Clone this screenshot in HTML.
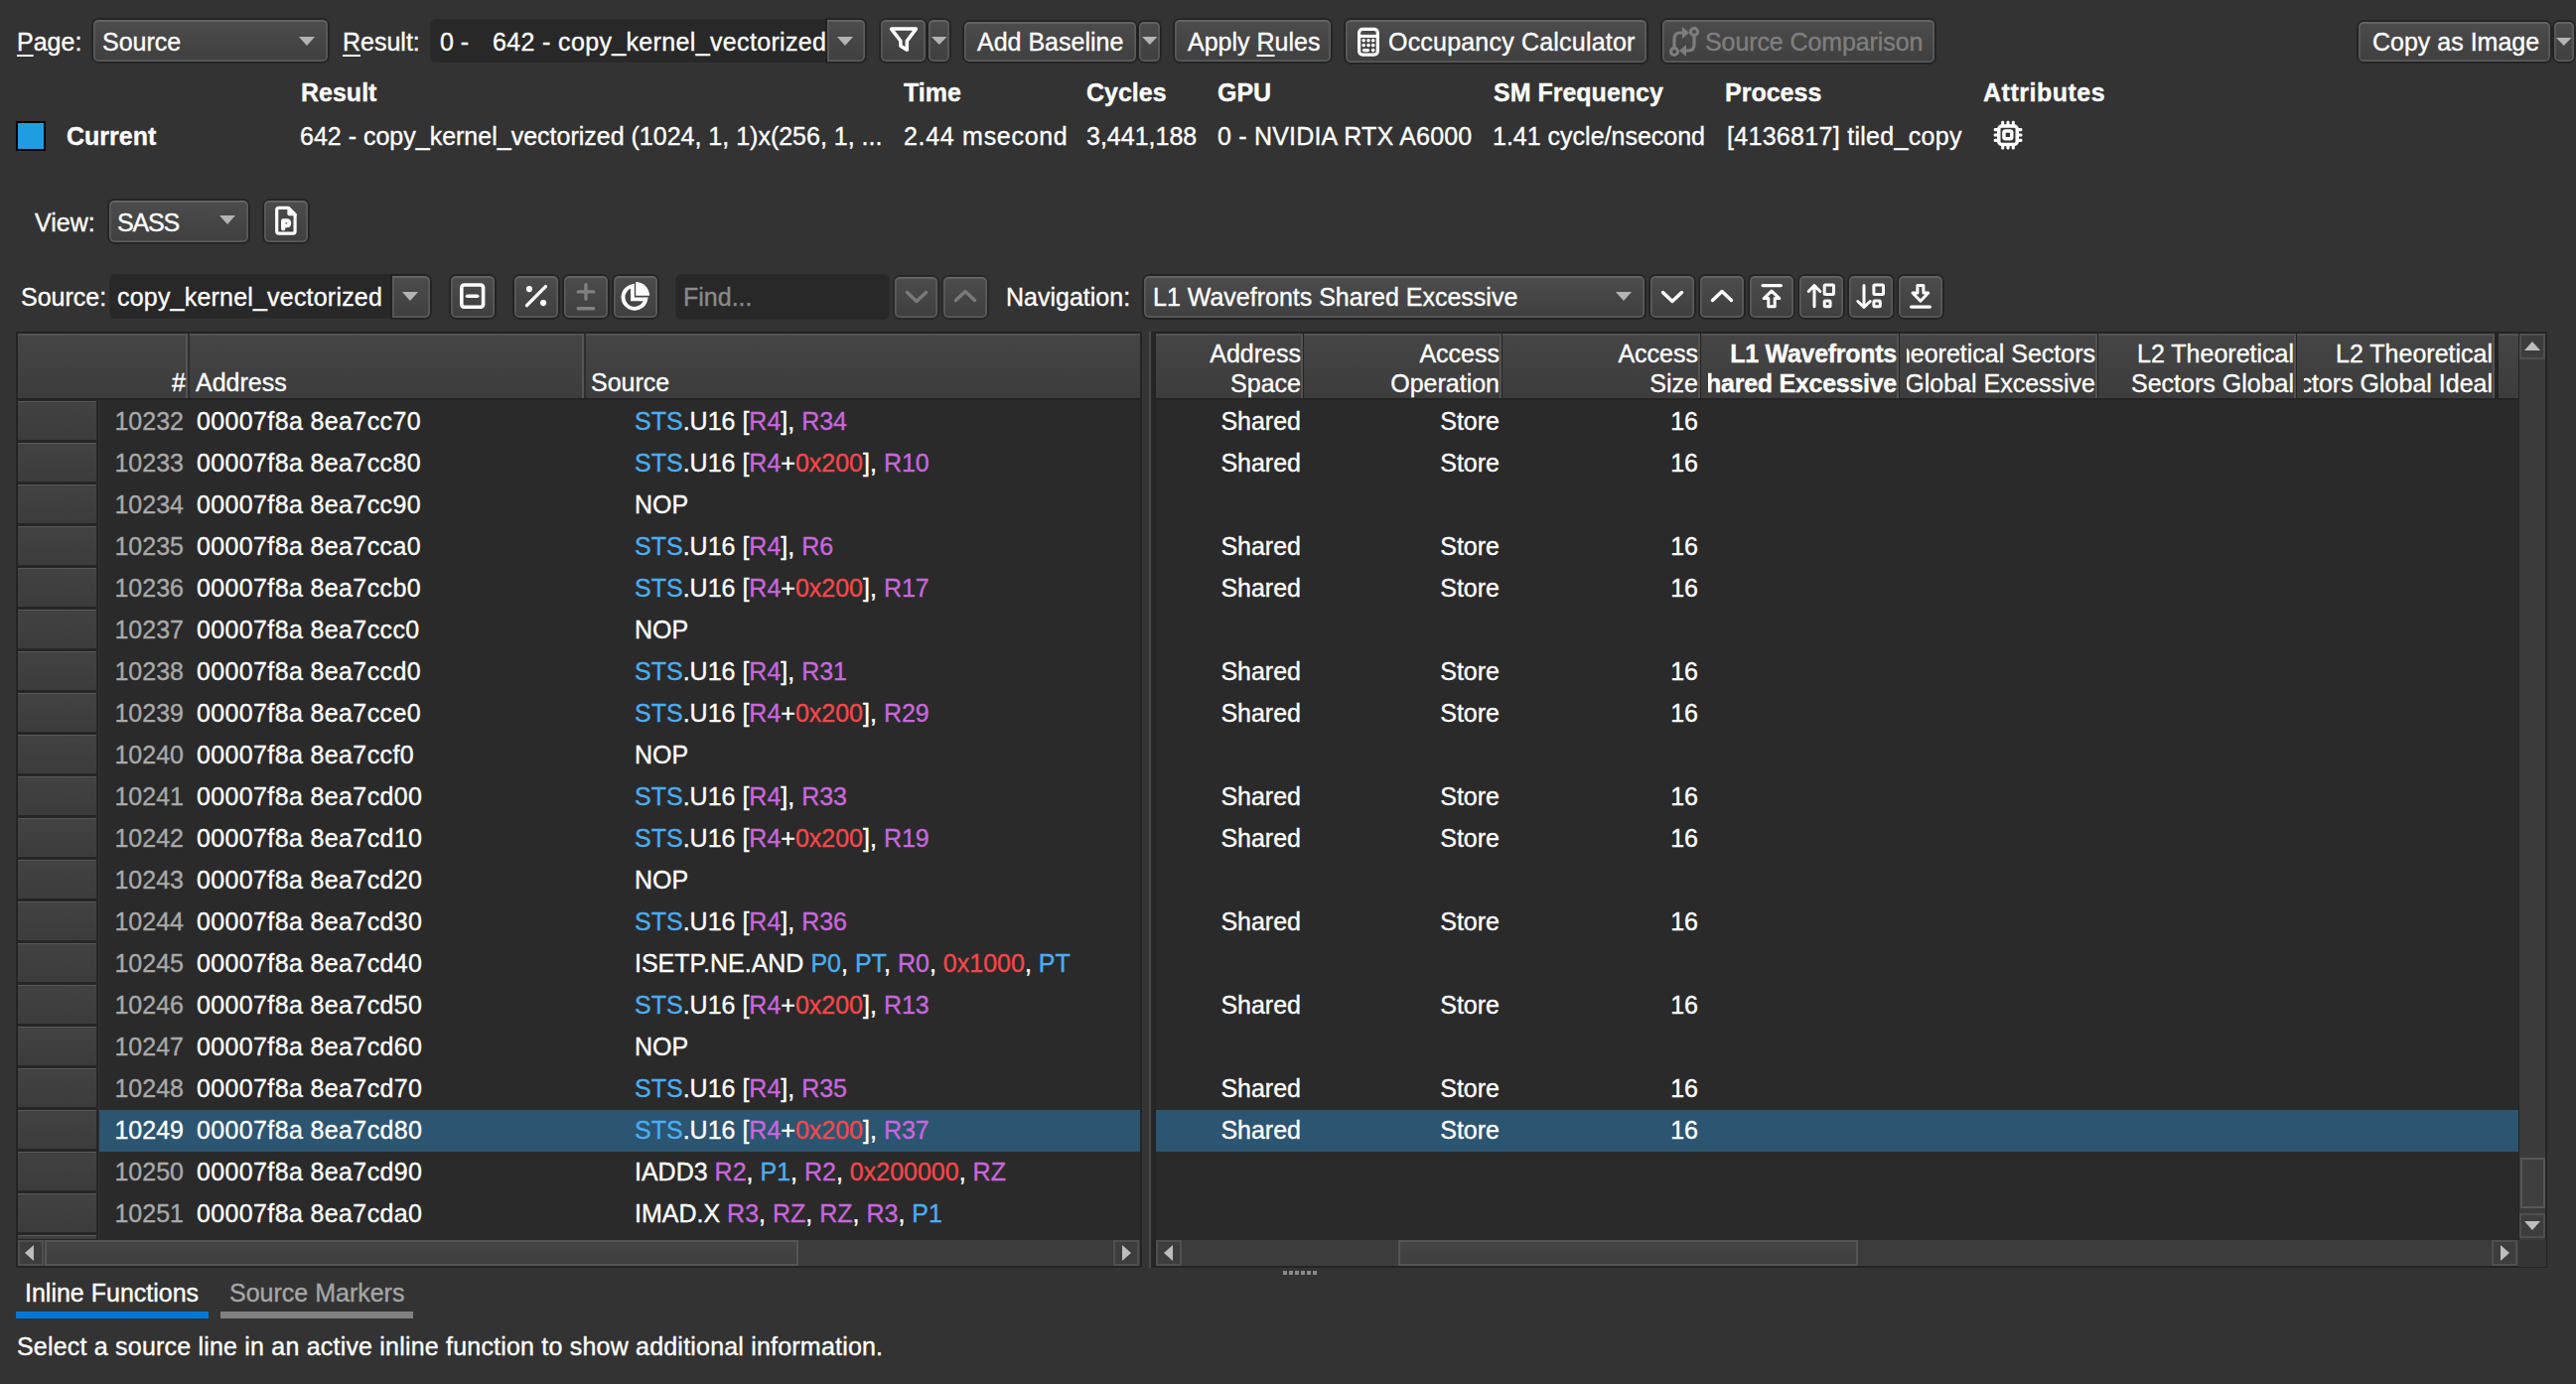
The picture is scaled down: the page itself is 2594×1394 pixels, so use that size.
<!DOCTYPE html><html><head><meta charset="utf-8"><style>
*{box-sizing:border-box}
html,body{margin:0;padding:0}
body{width:2594px;height:1394px;background:#333333;position:relative;overflow:hidden;font-family:"Liberation Sans",sans-serif;font-size:25px;color:#fff;-webkit-text-stroke-width:0.35px}
.a{position:absolute}
.t{position:absolute;white-space:pre}
.btn{position:absolute;border:1.8px solid #232323;border-radius:6px;background:linear-gradient(#4c4c4c,#3f3f3f);box-shadow:inset 0 1.8px 0 #666,inset 0 0 0 1.8px #5a5a5a,0 0 0 0.8px rgba(20,20,20,0.5)}
.fld{position:absolute;border-radius:6px;background:#282828;border:1px solid #2b2b2b}
.hdr{position:absolute;background:linear-gradient(#454545,#3c3c3c);border-top:2px solid #525252;border-right:2px solid #535353}
.vh{position:absolute;background:linear-gradient(#424242,#3c3c3c);border-top:1.3px solid #585858}
.clip{position:absolute;overflow:hidden}
</style></head><body><div class="t" style="left:17px;top:30px;color:#fff;font-size:25px;line-height:25px;"><u style="text-decoration-thickness:2px;text-underline-offset:4px">P</u>age:</div>
<div class="btn" style="left:93px;top:19px;width:238px;height:44px;"></div>
<div class="t" style="left:103px;top:30px;color:#fff;font-size:25px;line-height:25px;">Source</div>
<svg class="a" style="left:301.0px;top:36.5px" width="16" height="9"><path d="M0 0H16L8.0 9Z" fill="#b4b4b4"/></svg>
<div class="t" style="left:345px;top:30px;color:#fff;font-size:25px;line-height:25px;"><u style="text-decoration-thickness:2px;text-underline-offset:4px">R</u>esult:</div>
<div class="fld" style="left:433px;top:19px;width:439px;height:44px"></div>
<div class="btn" style="left:832px;top:19px;width:40px;height:44px;border-radius:0 6px 6px 0"></div>
<div class="clip" style="left:440px;top:20px;width:392px;height:42px">
<div class="t" style="left:3px;top:10px;line-height:25px">0 -</div><div class="t" style="left:56px;top:10px;line-height:25px;letter-spacing:0.35px">642 - copy_kernel_vectorized</div></div>
<svg class="a" style="left:843.0px;top:36.5px" width="16" height="9"><path d="M0 0H16L8.0 9Z" fill="#b4b4b4"/></svg>
<div class="btn" style="left:886px;top:19px;width:47px;height:44px;"></div>
<svg class="a" style="left:890px;top:24px" width="40" height="32" viewBox="0 0 40 32"><path d="M7.6 5.1H32.4L23.3 17.2V26.3L16.9 22.2V17.2Z" fill="none" stroke="#fff" stroke-width="3.5" stroke-linejoin="round"/></svg>
<div class="btn" style="left:934px;top:19px;width:23px;height:44px;"></div>
<svg class="a" style="left:938.25px;top:37.0px" width="15.5" height="8"><path d="M0 0H15.5L7.75 8Z" fill="#b4b4b4"/></svg>
<div class="btn" style="left:970px;top:21px;width:175px;height:42px;"></div>
<div class="t" style="left:984px;top:30px;color:#fff;font-size:25px;line-height:25px;">Add Baseline</div>
<div class="btn" style="left:1146px;top:21px;width:23px;height:42px;"></div>
<svg class="a" style="left:1150.25px;top:37.0px" width="15.5" height="8"><path d="M0 0H15.5L7.75 8Z" fill="#b4b4b4"/></svg>
<div class="btn" style="left:1182px;top:19px;width:159px;height:44px;"></div>
<div class="t" style="left:1196px;top:30px;color:#fff;font-size:25px;line-height:25px;">Apply <u style="text-decoration-thickness:2px;text-underline-offset:4px">R</u>ules</div>
<div class="btn" style="left:1354px;top:19px;width:305px;height:45px;"></div>
<svg class="a" style="left:1366px;top:27px" width="24" height="31" viewBox="0 0 24 31"><rect x="2.6" y="2.3" width="18.7" height="25.8" rx="3.5" fill="none" stroke="#fff" stroke-width="3.2"/><rect x="2.6" y="7.9" width="18.7" height="3.1" fill="#fff"/><circle cx="7.2" cy="13.8" r="1.8" fill="#fff"/><circle cx="7.2" cy="18.6" r="1.8" fill="#fff"/><circle cx="12" cy="13.8" r="1.8" fill="#fff"/><circle cx="12" cy="18.6" r="1.8" fill="#fff"/><circle cx="16.7" cy="13.8" r="1.8" fill="#fff"/><circle cx="16.7" cy="18.6" r="1.8" fill="#fff"/><circle cx="16.7" cy="23.6" r="1.8" fill="#fff"/><rect x="5.8" y="21.9" width="7.3" height="3.4" rx="1.7" fill="#fff"/></svg>
<div class="t" style="left:1398px;top:30px;color:#fff;font-size:25px;line-height:25px;letter-spacing:0.2px">Occupancy Calculator</div>
<div class="btn" style="left:1673px;top:19px;width:276px;height:45px;"></div>
<svg class="a" style="left:1681px;top:27px" width="30" height="31" viewBox="0 0 30 31"><g fill="none" stroke="#7d7d7d" stroke-width="3.2" stroke-linecap="round" stroke-linejoin="round"><circle cx="5" cy="25" r="3.5"/><circle cx="25" cy="5" r="3.5"/><path d="M5 21V12Q5 6 11 6H14"/><path d="M25 9V18Q25 24 19 24H16"/></g><path d="M13 0L20 6L13 12Z" fill="#7d7d7d"/><path d="M17 18L10 24L17 30Z" fill="#7d7d7d"/></svg>
<div class="t" style="left:1717px;top:30px;color:#7f7f7f;font-size:25px;line-height:25px;letter-spacing:-0.1px">Source Comparison</div>
<div class="btn" style="left:2374px;top:21px;width:195px;height:42px;"></div>
<div class="t" style="left:2389px;top:30px;color:#fff;font-size:25px;line-height:25px;">Copy as Image</div>
<div class="btn" style="left:2571px;top:21px;width:22px;height:42px;"></div>
<svg class="a" style="left:2574.25px;top:37.5px" width="15.5" height="8"><path d="M0 0H15.5L7.75 8Z" fill="#b4b4b4"/></svg>
<div class="t" style="left:303px;top:81px;color:#fff;font-weight:700;font-size:25px;line-height:25px;">Result</div>
<div class="t" style="left:910px;top:81px;color:#fff;font-weight:700;font-size:25px;line-height:25px;">Time</div>
<div class="t" style="left:1094px;top:81px;color:#fff;font-weight:700;font-size:25px;line-height:25px;">Cycles</div>
<div class="t" style="left:1226px;top:81px;color:#fff;font-weight:700;font-size:25px;line-height:25px;">GPU</div>
<div class="t" style="left:1504px;top:81px;color:#fff;font-weight:700;font-size:25px;line-height:25px;">SM Frequency</div>
<div class="t" style="left:1737px;top:81px;color:#fff;font-weight:700;font-size:25px;line-height:25px;">Process</div>
<div class="t" style="left:1997px;top:81px;color:#fff;font-weight:700;font-size:25px;line-height:25px;letter-spacing:0.5px">Attributes</div>
<div class="a" style="left:16px;top:122px;width:30px;height:30px;background:#1f9de0;border:2px solid #000"></div>
<div class="t" style="left:67px;top:125px;color:#fff;font-weight:700;font-size:25px;line-height:25px;">Current</div>
<div class="t" style="left:302px;top:125px;color:#fff;font-size:25px;line-height:25px;">642 - copy_kernel_vectorized (1024, 1, 1)x(256, 1, ...</div>
<div class="t" style="left:910px;top:125px;color:#fff;font-size:25px;line-height:25px;letter-spacing:0.7px">2.44 msecond</div>
<div class="t" style="left:1094px;top:125px;color:#fff;font-size:25px;line-height:25px;">3,441,188</div>
<div class="t" style="left:1226px;top:125px;color:#fff;font-size:25px;line-height:25px;letter-spacing:0.2px">0 - NVIDIA RTX A6000</div>
<div class="t" style="left:1503px;top:125px;color:#fff;font-size:25px;line-height:25px;">1.41 cycle/nsecond</div>
<div class="t" style="left:1739px;top:125px;color:#fff;font-size:25px;line-height:25px;letter-spacing:0.3px">[4136817] tiled_copy</div>
<svg class="a" style="left:2007px;top:121px" width="30" height="30" viewBox="0 0 30 30"><rect x="5.75" y="6" width="18.5" height="18.5" rx="3" fill="none" stroke="#fff" stroke-width="3.5"/><rect x="10.95" y="11" width="7.8" height="7.8" rx="1.5" fill="none" stroke="#fff" stroke-width="3.5"/><rect x="8.2" y="0.7" width="3" height="5" rx="1.2" fill="#fff"/><rect x="8.2" y="24.6" width="3" height="4.8" rx="1.2" fill="#fff"/><rect x="0.7" y="8.1" width="5" height="3.2" rx="1.2" fill="#fff"/><rect x="24.6" y="8.1" width="4.8" height="3.2" rx="1.2" fill="#fff"/><rect x="13.5" y="0.7" width="3" height="5" rx="1.2" fill="#fff"/><rect x="13.5" y="24.6" width="3" height="4.8" rx="1.2" fill="#fff"/><rect x="0.7" y="13.4" width="5" height="3.2" rx="1.2" fill="#fff"/><rect x="24.6" y="13.4" width="4.8" height="3.2" rx="1.2" fill="#fff"/><rect x="18.8" y="0.7" width="3" height="5" rx="1.2" fill="#fff"/><rect x="18.8" y="24.6" width="3" height="4.8" rx="1.2" fill="#fff"/><rect x="0.7" y="18.7" width="5" height="3.2" rx="1.2" fill="#fff"/><rect x="24.6" y="18.7" width="4.8" height="3.2" rx="1.2" fill="#fff"/></svg>
<div class="t" style="left:35px;top:212px;color:#fff;font-size:25px;line-height:25px;">View:</div>
<div class="btn" style="left:109px;top:201px;width:142px;height:44px;"></div>
<div class="t" style="left:118px;top:212px;color:#fff;font-size:25px;line-height:25px;letter-spacing:-1.2px">SASS</div>
<svg class="a" style="left:221.0px;top:216.5px" width="16" height="9"><path d="M0 0H16L8.0 9Z" fill="#b4b4b4"/></svg>
<div class="btn" style="left:265px;top:201px;width:46px;height:44px;"></div>
<svg class="a" style="left:276px;top:206px" width="24" height="32" viewBox="0 0 24 32"><path d="M2.7 5.3Q2.7 3.3 4.7 3.3H14.3L21.1 10.1V27.1Q21.1 29.1 19.1 29.1H4.7Q2.7 29.1 2.7 27.1Z" fill="none" stroke="#fff" stroke-width="3.2" stroke-linejoin="round"/><path d="M13.4 2H15L22.7 9.7V11.2H15Q13.4 11.2 13.4 9.6Z" fill="#fff"/><path d="M9.2 16.3H12.8Q15.3 16.3 15.3 18.85Q15.3 21.4 12.8 21.4H9.2Z" fill="none" stroke="#fff" stroke-width="3.9" stroke-linejoin="round"/><path d="M9.2 17V24.3" stroke="#fff" stroke-width="4.3" stroke-linecap="round"/></svg>
<div class="t" style="left:21px;top:287px;color:#fff;font-size:25px;line-height:25px;">Source:</div>
<div class="fld" style="left:110px;top:276px;width:324px;height:45px"></div>
<div class="btn" style="left:394px;top:277px;width:40px;height:44px;border-radius:0 6px 6px 0"></div>
<div class="t" style="left:118px;top:287px;color:#fff;font-size:25px;line-height:25px;letter-spacing:0.2px">copy_kernel_vectorized</div>
<svg class="a" style="left:405.0px;top:293.5px" width="16" height="9"><path d="M0 0H16L8.0 9Z" fill="#b4b4b4"/></svg>
<div class="btn" style="left:453px;top:277px;width:46px;height:44px;"></div>
<svg class="a" style="left:462px;top:284px" width="28" height="28" viewBox="0 0 28 28"><rect x="2.8" y="3" width="21.8" height="22.2" rx="2.5" fill="none" stroke="#fff" stroke-width="3.6"/><path d="M8.5 14.2H18.8" stroke="#fff" stroke-width="3.4" stroke-linecap="round"/></svg>
<div class="btn" style="left:517px;top:277px;width:46px;height:44px;"></div>
<svg class="a" style="left:523px;top:285px" width="34" height="28" viewBox="0 0 34 28"><circle cx="10" cy="6.1" r="3.1" fill="#fff"/><circle cx="24.1" cy="20.1" r="3.1" fill="#fff"/><path d="M7.5 22.6L26.4 3.6" stroke="#fff" stroke-width="3.4" stroke-linecap="round"/></svg>
<div class="btn" style="left:567px;top:277px;width:46px;height:44px;"></div>
<svg class="a" style="left:575px;top:283px" width="30" height="32" viewBox="0 0 30 32"><path d="M15 3.6V18.2M7.2 10.9H22.7M7.2 27.7H22.7" stroke="#808080" stroke-width="3.4" stroke-linecap="round"/></svg>
<div class="btn" style="left:617px;top:277px;width:46px;height:44px;"></div>
<svg class="a" style="left:625px;top:283px" width="32" height="32" viewBox="0 0 32 32"><path d="M11.9 5V18.3H25.33A11.5 11.5 0 1 1 11.9 5Z" fill="none" stroke="#fff" stroke-width="3.8"/><path d="M15.2 14.7V0.9A13.8 13.8 0 0 1 29 14.7Z" fill="#fff"/></svg>
<div class="fld" style="left:680px;top:276px;width:216px;height:46px"></div>
<div class="t" style="left:688px;top:287px;color:#8a8a8a;font-size:25px;line-height:25px;">Find...</div>
<div class="btn" style="left:900px;top:278px;width:45px;height:43px;border-color:#2c2c2c"></div>
<svg class="a" style="left:911px;top:292px" width="24" height="14" viewBox="0 0 24 14"><path d="M2.5 2.5L12 11.5L21.5 2.5" fill="none" stroke="#7a7a7a" stroke-width="3.4" stroke-linecap="round" stroke-linejoin="round"/></svg>
<div class="btn" style="left:949px;top:278px;width:46px;height:43px;border-color:#2c2c2c"></div>
<svg class="a" style="left:960px;top:291px" width="24" height="14" viewBox="0 0 24 14"><path d="M2.5 11.5L12 2.5L21.5 11.5" fill="none" stroke="#7a7a7a" stroke-width="3.4" stroke-linecap="round" stroke-linejoin="round"/></svg>
<div class="t" style="left:1013px;top:287px;color:#fff;font-size:25px;line-height:25px;">Navigation:</div>
<div class="btn" style="left:1151px;top:277px;width:506px;height:44px;"></div>
<div class="t" style="left:1161px;top:287px;color:#fff;font-size:25px;line-height:25px;">L1 Wavefronts Shared Excessive</div>
<svg class="a" style="left:1627.0px;top:293.5px" width="16" height="9"><path d="M0 0H16L8.0 9Z" fill="#b4b4b4"/></svg>
<div class="btn" style="left:1661px;top:277px;width:46px;height:44px;"></div>
<div class="btn" style="left:1711px;top:277px;width:46px;height:44px;"></div>
<div class="btn" style="left:1761px;top:277px;width:46px;height:44px;"></div>
<div class="btn" style="left:1811px;top:277px;width:46px;height:44px;"></div>
<div class="btn" style="left:1861px;top:277px;width:46px;height:44px;"></div>
<div class="btn" style="left:1911px;top:277px;width:46px;height:44px;"></div>
<svg class="a" style="left:1672px;top:292px" width="24" height="14" viewBox="0 0 24 14"><path d="M2.5 2.5L12 11.5L21.5 2.5" fill="none" stroke="#fff" stroke-width="3.4" stroke-linecap="round" stroke-linejoin="round"/></svg>
<svg class="a" style="left:1722px;top:291px" width="24" height="14" viewBox="0 0 24 14"><path d="M2.5 11.5L12 2.5L21.5 11.5" fill="none" stroke="#fff" stroke-width="3.4" stroke-linecap="round" stroke-linejoin="round"/></svg>
<svg class="a" style="left:1770px;top:284px" width="28" height="30" viewBox="0 0 28 30"><rect x="3.5" y="2" width="21.5" height="3.2" rx="1.6" fill="#fff"/><path d="M14 9L6.2 16.6H10.8V24.8H17.2V16.6H21.8Z" fill="none" stroke="#fff" stroke-width="3" stroke-linejoin="round"/></svg>
<svg class="a" style="left:1818px;top:284px" width="32" height="30" viewBox="0 0 32 30"><path d="M9 3.5V24.8M3.2 9.5L9 3.5L14.8 9.5" fill="none" stroke="#fff" stroke-width="3" stroke-linecap="round" stroke-linejoin="round"/><rect x="19.2" y="3" width="9.3" height="9.5" rx="1" fill="none" stroke="#fff" stroke-width="3"/><rect x="19.2" y="18.9" width="5.9" height="5.9" rx="1" fill="none" stroke="#fff" stroke-width="3"/></svg>
<svg class="a" style="left:1868px;top:284px" width="32" height="30" viewBox="0 0 32 30"><path d="M9 3.5V25M2.8 19.5L9 25.5L15.2 19.5" fill="none" stroke="#fff" stroke-width="3" stroke-linecap="round" stroke-linejoin="round"/><rect x="18.9" y="3" width="9.6" height="9.5" rx="1" fill="none" stroke="#fff" stroke-width="3"/><rect x="18.9" y="18.9" width="6.4" height="5.9" rx="1" fill="none" stroke="#fff" stroke-width="3"/></svg>
<svg class="a" style="left:1920px;top:284px" width="28" height="30" viewBox="0 0 28 30"><path d="M10.9 3.5H16.9V11H21.8L13.9 19.2L6 11H10.9Z" fill="none" stroke="#fff" stroke-width="3" stroke-linejoin="round"/><rect x="3" y="23.5" width="22" height="3.2" rx="1.6" fill="#fff"/></svg>
<div class="a" style="left:16px;top:334px;width:1134px;height:943px;background:#242424"></div>
<div class="hdr" style="left:18px;top:336px;width:1130px;height:65px;border-right:0"></div>
<div class="a" style="left:98px;top:336px;width:2px;height:65px;background:#2e2e2e;opacity:0"></div>
<div class="a" style="left:187px;top:336px;width:2px;height:65px;background:#555"></div>
<div class="a" style="left:189px;top:336px;width:2px;height:65px;background:#2e2e2e"></div>
<div class="a" style="left:586px;top:336px;width:2px;height:65px;background:#555"></div>
<div class="a" style="left:588px;top:336px;width:2px;height:65px;background:#2e2e2e"></div>
<div class="t" style="left:127px;width:60px;text-align:right;top:373px;color:#fff;font-size:25px;line-height:25px;">#</div>
<div class="t" style="left:197px;top:373px;color:#fff;font-size:25px;line-height:25px;">Address</div>
<div class="t" style="left:595px;top:373px;color:#fff;font-size:25px;line-height:25px;">Source</div>
<div class="a" style="left:100px;top:403px;width:1048px;height:846px;background:#2a2a2a"></div>
<div class="a" style="left:18px;top:403px;width:82px;height:846px;background:#262626"></div>
<div class="vh" style="left:18px;top:404px;width:79px;height:39px"></div>
<div class="t" style="left:95px;width:90px;text-align:right;top:412px;color:#a9a9a9;font-size:25px;line-height:25px;">10232</div>
<div class="t" style="left:198px;top:412px;color:#fff;font-size:25px;line-height:25px;letter-spacing:0.37px">00007f8a 8ea7cc70</div>
<div class="t" style="left:639px;top:412px;color:#fff;font-size:25px;line-height:25px;"><span style="color:#4aaef3">STS</span><span style="color:#ffffff">.U16 [</span><span style="color:#c867dc">R4</span><span style="color:#ffffff">], </span><span style="color:#c867dc">R34</span></div>
<div class="t" style="left:1190px;width:120px;text-align:right;top:412px;color:#fff;font-size:25px;line-height:25px;">Shared</div>
<div class="t" style="left:1390px;width:120px;text-align:right;top:412px;color:#fff;font-size:25px;line-height:25px;">Store</div>
<div class="t" style="left:1590px;width:120px;text-align:right;top:412px;color:#fff;font-size:25px;line-height:25px;">16</div>
<div class="vh" style="left:18px;top:446px;width:79px;height:39px"></div>
<div class="t" style="left:95px;width:90px;text-align:right;top:454px;color:#a9a9a9;font-size:25px;line-height:25px;">10233</div>
<div class="t" style="left:198px;top:454px;color:#fff;font-size:25px;line-height:25px;letter-spacing:0.37px">00007f8a 8ea7cc80</div>
<div class="t" style="left:639px;top:454px;color:#fff;font-size:25px;line-height:25px;"><span style="color:#4aaef3">STS</span><span style="color:#ffffff">.U16 [</span><span style="color:#c867dc">R4</span><span style="color:#ffffff">+</span><span style="color:#f6474b">0x200</span><span style="color:#ffffff">], </span><span style="color:#c867dc">R10</span></div>
<div class="t" style="left:1190px;width:120px;text-align:right;top:454px;color:#fff;font-size:25px;line-height:25px;">Shared</div>
<div class="t" style="left:1390px;width:120px;text-align:right;top:454px;color:#fff;font-size:25px;line-height:25px;">Store</div>
<div class="t" style="left:1590px;width:120px;text-align:right;top:454px;color:#fff;font-size:25px;line-height:25px;">16</div>
<div class="vh" style="left:18px;top:488px;width:79px;height:39px"></div>
<div class="t" style="left:95px;width:90px;text-align:right;top:496px;color:#a9a9a9;font-size:25px;line-height:25px;">10234</div>
<div class="t" style="left:198px;top:496px;color:#fff;font-size:25px;line-height:25px;letter-spacing:0.37px">00007f8a 8ea7cc90</div>
<div class="t" style="left:639px;top:496px;color:#fff;font-size:25px;line-height:25px;"><span style="color:#ffffff">NOP</span></div>
<div class="vh" style="left:18px;top:530px;width:79px;height:39px"></div>
<div class="t" style="left:95px;width:90px;text-align:right;top:538px;color:#a9a9a9;font-size:25px;line-height:25px;">10235</div>
<div class="t" style="left:198px;top:538px;color:#fff;font-size:25px;line-height:25px;letter-spacing:0.37px">00007f8a 8ea7cca0</div>
<div class="t" style="left:639px;top:538px;color:#fff;font-size:25px;line-height:25px;"><span style="color:#4aaef3">STS</span><span style="color:#ffffff">.U16 [</span><span style="color:#c867dc">R4</span><span style="color:#ffffff">], </span><span style="color:#c867dc">R6</span></div>
<div class="t" style="left:1190px;width:120px;text-align:right;top:538px;color:#fff;font-size:25px;line-height:25px;">Shared</div>
<div class="t" style="left:1390px;width:120px;text-align:right;top:538px;color:#fff;font-size:25px;line-height:25px;">Store</div>
<div class="t" style="left:1590px;width:120px;text-align:right;top:538px;color:#fff;font-size:25px;line-height:25px;">16</div>
<div class="vh" style="left:18px;top:572px;width:79px;height:39px"></div>
<div class="t" style="left:95px;width:90px;text-align:right;top:580px;color:#a9a9a9;font-size:25px;line-height:25px;">10236</div>
<div class="t" style="left:198px;top:580px;color:#fff;font-size:25px;line-height:25px;letter-spacing:0.37px">00007f8a 8ea7ccb0</div>
<div class="t" style="left:639px;top:580px;color:#fff;font-size:25px;line-height:25px;"><span style="color:#4aaef3">STS</span><span style="color:#ffffff">.U16 [</span><span style="color:#c867dc">R4</span><span style="color:#ffffff">+</span><span style="color:#f6474b">0x200</span><span style="color:#ffffff">], </span><span style="color:#c867dc">R17</span></div>
<div class="t" style="left:1190px;width:120px;text-align:right;top:580px;color:#fff;font-size:25px;line-height:25px;">Shared</div>
<div class="t" style="left:1390px;width:120px;text-align:right;top:580px;color:#fff;font-size:25px;line-height:25px;">Store</div>
<div class="t" style="left:1590px;width:120px;text-align:right;top:580px;color:#fff;font-size:25px;line-height:25px;">16</div>
<div class="vh" style="left:18px;top:614px;width:79px;height:39px"></div>
<div class="t" style="left:95px;width:90px;text-align:right;top:622px;color:#a9a9a9;font-size:25px;line-height:25px;">10237</div>
<div class="t" style="left:198px;top:622px;color:#fff;font-size:25px;line-height:25px;letter-spacing:0.37px">00007f8a 8ea7ccc0</div>
<div class="t" style="left:639px;top:622px;color:#fff;font-size:25px;line-height:25px;"><span style="color:#ffffff">NOP</span></div>
<div class="vh" style="left:18px;top:656px;width:79px;height:39px"></div>
<div class="t" style="left:95px;width:90px;text-align:right;top:664px;color:#a9a9a9;font-size:25px;line-height:25px;">10238</div>
<div class="t" style="left:198px;top:664px;color:#fff;font-size:25px;line-height:25px;letter-spacing:0.37px">00007f8a 8ea7ccd0</div>
<div class="t" style="left:639px;top:664px;color:#fff;font-size:25px;line-height:25px;"><span style="color:#4aaef3">STS</span><span style="color:#ffffff">.U16 [</span><span style="color:#c867dc">R4</span><span style="color:#ffffff">], </span><span style="color:#c867dc">R31</span></div>
<div class="t" style="left:1190px;width:120px;text-align:right;top:664px;color:#fff;font-size:25px;line-height:25px;">Shared</div>
<div class="t" style="left:1390px;width:120px;text-align:right;top:664px;color:#fff;font-size:25px;line-height:25px;">Store</div>
<div class="t" style="left:1590px;width:120px;text-align:right;top:664px;color:#fff;font-size:25px;line-height:25px;">16</div>
<div class="vh" style="left:18px;top:698px;width:79px;height:39px"></div>
<div class="t" style="left:95px;width:90px;text-align:right;top:706px;color:#a9a9a9;font-size:25px;line-height:25px;">10239</div>
<div class="t" style="left:198px;top:706px;color:#fff;font-size:25px;line-height:25px;letter-spacing:0.37px">00007f8a 8ea7cce0</div>
<div class="t" style="left:639px;top:706px;color:#fff;font-size:25px;line-height:25px;"><span style="color:#4aaef3">STS</span><span style="color:#ffffff">.U16 [</span><span style="color:#c867dc">R4</span><span style="color:#ffffff">+</span><span style="color:#f6474b">0x200</span><span style="color:#ffffff">], </span><span style="color:#c867dc">R29</span></div>
<div class="t" style="left:1190px;width:120px;text-align:right;top:706px;color:#fff;font-size:25px;line-height:25px;">Shared</div>
<div class="t" style="left:1390px;width:120px;text-align:right;top:706px;color:#fff;font-size:25px;line-height:25px;">Store</div>
<div class="t" style="left:1590px;width:120px;text-align:right;top:706px;color:#fff;font-size:25px;line-height:25px;">16</div>
<div class="vh" style="left:18px;top:740px;width:79px;height:39px"></div>
<div class="t" style="left:95px;width:90px;text-align:right;top:748px;color:#a9a9a9;font-size:25px;line-height:25px;">10240</div>
<div class="t" style="left:198px;top:748px;color:#fff;font-size:25px;line-height:25px;letter-spacing:0.37px">00007f8a 8ea7ccf0</div>
<div class="t" style="left:639px;top:748px;color:#fff;font-size:25px;line-height:25px;"><span style="color:#ffffff">NOP</span></div>
<div class="vh" style="left:18px;top:782px;width:79px;height:39px"></div>
<div class="t" style="left:95px;width:90px;text-align:right;top:790px;color:#a9a9a9;font-size:25px;line-height:25px;">10241</div>
<div class="t" style="left:198px;top:790px;color:#fff;font-size:25px;line-height:25px;letter-spacing:0.37px">00007f8a 8ea7cd00</div>
<div class="t" style="left:639px;top:790px;color:#fff;font-size:25px;line-height:25px;"><span style="color:#4aaef3">STS</span><span style="color:#ffffff">.U16 [</span><span style="color:#c867dc">R4</span><span style="color:#ffffff">], </span><span style="color:#c867dc">R33</span></div>
<div class="t" style="left:1190px;width:120px;text-align:right;top:790px;color:#fff;font-size:25px;line-height:25px;">Shared</div>
<div class="t" style="left:1390px;width:120px;text-align:right;top:790px;color:#fff;font-size:25px;line-height:25px;">Store</div>
<div class="t" style="left:1590px;width:120px;text-align:right;top:790px;color:#fff;font-size:25px;line-height:25px;">16</div>
<div class="vh" style="left:18px;top:824px;width:79px;height:39px"></div>
<div class="t" style="left:95px;width:90px;text-align:right;top:832px;color:#a9a9a9;font-size:25px;line-height:25px;">10242</div>
<div class="t" style="left:198px;top:832px;color:#fff;font-size:25px;line-height:25px;letter-spacing:0.37px">00007f8a 8ea7cd10</div>
<div class="t" style="left:639px;top:832px;color:#fff;font-size:25px;line-height:25px;"><span style="color:#4aaef3">STS</span><span style="color:#ffffff">.U16 [</span><span style="color:#c867dc">R4</span><span style="color:#ffffff">+</span><span style="color:#f6474b">0x200</span><span style="color:#ffffff">], </span><span style="color:#c867dc">R19</span></div>
<div class="t" style="left:1190px;width:120px;text-align:right;top:832px;color:#fff;font-size:25px;line-height:25px;">Shared</div>
<div class="t" style="left:1390px;width:120px;text-align:right;top:832px;color:#fff;font-size:25px;line-height:25px;">Store</div>
<div class="t" style="left:1590px;width:120px;text-align:right;top:832px;color:#fff;font-size:25px;line-height:25px;">16</div>
<div class="vh" style="left:18px;top:866px;width:79px;height:39px"></div>
<div class="t" style="left:95px;width:90px;text-align:right;top:874px;color:#a9a9a9;font-size:25px;line-height:25px;">10243</div>
<div class="t" style="left:198px;top:874px;color:#fff;font-size:25px;line-height:25px;letter-spacing:0.37px">00007f8a 8ea7cd20</div>
<div class="t" style="left:639px;top:874px;color:#fff;font-size:25px;line-height:25px;"><span style="color:#ffffff">NOP</span></div>
<div class="vh" style="left:18px;top:908px;width:79px;height:39px"></div>
<div class="t" style="left:95px;width:90px;text-align:right;top:916px;color:#a9a9a9;font-size:25px;line-height:25px;">10244</div>
<div class="t" style="left:198px;top:916px;color:#fff;font-size:25px;line-height:25px;letter-spacing:0.37px">00007f8a 8ea7cd30</div>
<div class="t" style="left:639px;top:916px;color:#fff;font-size:25px;line-height:25px;"><span style="color:#4aaef3">STS</span><span style="color:#ffffff">.U16 [</span><span style="color:#c867dc">R4</span><span style="color:#ffffff">], </span><span style="color:#c867dc">R36</span></div>
<div class="t" style="left:1190px;width:120px;text-align:right;top:916px;color:#fff;font-size:25px;line-height:25px;">Shared</div>
<div class="t" style="left:1390px;width:120px;text-align:right;top:916px;color:#fff;font-size:25px;line-height:25px;">Store</div>
<div class="t" style="left:1590px;width:120px;text-align:right;top:916px;color:#fff;font-size:25px;line-height:25px;">16</div>
<div class="vh" style="left:18px;top:950px;width:79px;height:39px"></div>
<div class="t" style="left:95px;width:90px;text-align:right;top:958px;color:#a9a9a9;font-size:25px;line-height:25px;">10245</div>
<div class="t" style="left:198px;top:958px;color:#fff;font-size:25px;line-height:25px;letter-spacing:0.37px">00007f8a 8ea7cd40</div>
<div class="t" style="left:639px;top:958px;color:#fff;font-size:25px;line-height:25px;"><span style="color:#ffffff">ISETP.NE.AND </span><span style="color:#4aaef3">P0</span><span style="color:#ffffff">, </span><span style="color:#4aaef3">PT</span><span style="color:#ffffff">, </span><span style="color:#c867dc">R0</span><span style="color:#ffffff">, </span><span style="color:#f6474b">0x1000</span><span style="color:#ffffff">, </span><span style="color:#4aaef3">PT</span></div>
<div class="vh" style="left:18px;top:992px;width:79px;height:39px"></div>
<div class="t" style="left:95px;width:90px;text-align:right;top:1000px;color:#a9a9a9;font-size:25px;line-height:25px;">10246</div>
<div class="t" style="left:198px;top:1000px;color:#fff;font-size:25px;line-height:25px;letter-spacing:0.37px">00007f8a 8ea7cd50</div>
<div class="t" style="left:639px;top:1000px;color:#fff;font-size:25px;line-height:25px;"><span style="color:#4aaef3">STS</span><span style="color:#ffffff">.U16 [</span><span style="color:#c867dc">R4</span><span style="color:#ffffff">+</span><span style="color:#f6474b">0x200</span><span style="color:#ffffff">], </span><span style="color:#c867dc">R13</span></div>
<div class="t" style="left:1190px;width:120px;text-align:right;top:1000px;color:#fff;font-size:25px;line-height:25px;">Shared</div>
<div class="t" style="left:1390px;width:120px;text-align:right;top:1000px;color:#fff;font-size:25px;line-height:25px;">Store</div>
<div class="t" style="left:1590px;width:120px;text-align:right;top:1000px;color:#fff;font-size:25px;line-height:25px;">16</div>
<div class="vh" style="left:18px;top:1034px;width:79px;height:39px"></div>
<div class="t" style="left:95px;width:90px;text-align:right;top:1042px;color:#a9a9a9;font-size:25px;line-height:25px;">10247</div>
<div class="t" style="left:198px;top:1042px;color:#fff;font-size:25px;line-height:25px;letter-spacing:0.37px">00007f8a 8ea7cd60</div>
<div class="t" style="left:639px;top:1042px;color:#fff;font-size:25px;line-height:25px;"><span style="color:#ffffff">NOP</span></div>
<div class="vh" style="left:18px;top:1076px;width:79px;height:39px"></div>
<div class="t" style="left:95px;width:90px;text-align:right;top:1084px;color:#a9a9a9;font-size:25px;line-height:25px;">10248</div>
<div class="t" style="left:198px;top:1084px;color:#fff;font-size:25px;line-height:25px;letter-spacing:0.37px">00007f8a 8ea7cd70</div>
<div class="t" style="left:639px;top:1084px;color:#fff;font-size:25px;line-height:25px;"><span style="color:#4aaef3">STS</span><span style="color:#ffffff">.U16 [</span><span style="color:#c867dc">R4</span><span style="color:#ffffff">], </span><span style="color:#c867dc">R35</span></div>
<div class="t" style="left:1190px;width:120px;text-align:right;top:1084px;color:#fff;font-size:25px;line-height:25px;">Shared</div>
<div class="t" style="left:1390px;width:120px;text-align:right;top:1084px;color:#fff;font-size:25px;line-height:25px;">Store</div>
<div class="t" style="left:1590px;width:120px;text-align:right;top:1084px;color:#fff;font-size:25px;line-height:25px;">16</div>
<div class="a" style="left:100px;top:1118px;width:1048px;height:42px;background:#2c5571"></div>
<div class="a" style="left:1164px;top:1118px;width:1372px;height:42px;background:#2c5571"></div>
<div class="vh" style="left:18px;top:1118px;width:79px;height:39px"></div>
<div class="t" style="left:95px;width:90px;text-align:right;top:1126px;color:#ffffff;font-size:25px;line-height:25px;">10249</div>
<div class="t" style="left:198px;top:1126px;color:#fff;font-size:25px;line-height:25px;letter-spacing:0.37px">00007f8a 8ea7cd80</div>
<div class="t" style="left:639px;top:1126px;color:#fff;font-size:25px;line-height:25px;"><span style="color:#4aaef3">STS</span><span style="color:#ffffff">.U16 [</span><span style="color:#c867dc">R4</span><span style="color:#ffffff">+</span><span style="color:#f6474b">0x200</span><span style="color:#ffffff">], </span><span style="color:#c867dc">R37</span></div>
<div class="t" style="left:1190px;width:120px;text-align:right;top:1126px;color:#fff;font-size:25px;line-height:25px;">Shared</div>
<div class="t" style="left:1390px;width:120px;text-align:right;top:1126px;color:#fff;font-size:25px;line-height:25px;">Store</div>
<div class="t" style="left:1590px;width:120px;text-align:right;top:1126px;color:#fff;font-size:25px;line-height:25px;">16</div>
<div class="vh" style="left:18px;top:1160px;width:79px;height:39px"></div>
<div class="t" style="left:95px;width:90px;text-align:right;top:1168px;color:#a9a9a9;font-size:25px;line-height:25px;">10250</div>
<div class="t" style="left:198px;top:1168px;color:#fff;font-size:25px;line-height:25px;letter-spacing:0.37px">00007f8a 8ea7cd90</div>
<div class="t" style="left:639px;top:1168px;color:#fff;font-size:25px;line-height:25px;"><span style="color:#ffffff">IADD3 </span><span style="color:#c867dc">R2</span><span style="color:#ffffff">, </span><span style="color:#4aaef3">P1</span><span style="color:#ffffff">, </span><span style="color:#c867dc">R2</span><span style="color:#ffffff">, </span><span style="color:#f6474b">0x200000</span><span style="color:#ffffff">, </span><span style="color:#c867dc">RZ</span></div>
<div class="vh" style="left:18px;top:1202px;width:79px;height:39px"></div>
<div class="t" style="left:95px;width:90px;text-align:right;top:1210px;color:#a9a9a9;font-size:25px;line-height:25px;">10251</div>
<div class="t" style="left:198px;top:1210px;color:#fff;font-size:25px;line-height:25px;letter-spacing:0.37px">00007f8a 8ea7cda0</div>
<div class="t" style="left:639px;top:1210px;color:#fff;font-size:25px;line-height:25px;"><span style="color:#ffffff">IMAD.X </span><span style="color:#c867dc">R3</span><span style="color:#ffffff">, </span><span style="color:#c867dc">RZ</span><span style="color:#ffffff">, </span><span style="color:#c867dc">RZ</span><span style="color:#ffffff">, </span><span style="color:#c867dc">R3</span><span style="color:#ffffff">, </span><span style="color:#4aaef3">P1</span></div>
<div class="vh" style="left:18px;top:1244px;width:79px;height:4px"></div>
<div class="a" style="left:99px;top:403px;width:1px;height:846px;background:#313131"></div>
<div class="a" style="left:18px;top:1249px;width:1130px;height:26px;background:#3c3c3c"></div>
<div class="a" style="left:18px;top:1249px;width:26px;height:26px;background:#3d3d3d;border:2px solid #4f4f4f"></div>
<svg class="a" style="left:25px;top:1254px" width="9" height="16" viewBox="0 0 9 16"><path d="M9 0V16L0 8Z" fill="#bdbdbd"/></svg>
<div class="a" style="left:45px;top:1249px;width:759px;height:26px;background:linear-gradient(#454545,#3f3f3f);border:2px solid #555"></div>
<div class="a" style="left:1121px;top:1249px;width:26px;height:26px;background:#3d3d3d;border:2px solid #4f4f4f"></div>
<svg class="a" style="left:1130px;top:1254px" width="9" height="16" viewBox="0 0 9 16"><path d="M0 0V16L9 8Z" fill="#bdbdbd"/></svg>
<div class="a" style="left:1150px;top:334px;width:7px;height:943px;background:#353535"></div>
<div class="a" style="left:1157px;top:334px;width:2px;height:943px;background:#4a4a4a"></div>
<div class="a" style="left:1159px;top:334px;width:5px;height:943px;background:#262626"></div>
<div class="a" style="left:1162px;top:334px;width:1403px;height:943px;background:#242424"></div>
<div class="a" style="left:1164px;top:403px;width:1372px;height:846px;background:#2a2a2a"></div>
<div class="a" style="left:1164px;top:1118px;width:1372px;height:42px;background:#2c5571"></div>
<div class="t" style="left:1190px;width:120px;text-align:right;top:412px;color:#fff;font-size:25px;line-height:25px;">Shared</div>
<div class="t" style="left:1390px;width:120px;text-align:right;top:412px;color:#fff;font-size:25px;line-height:25px;">Store</div>
<div class="t" style="left:1590px;width:120px;text-align:right;top:412px;color:#fff;font-size:25px;line-height:25px;">16</div>
<div class="t" style="left:1190px;width:120px;text-align:right;top:454px;color:#fff;font-size:25px;line-height:25px;">Shared</div>
<div class="t" style="left:1390px;width:120px;text-align:right;top:454px;color:#fff;font-size:25px;line-height:25px;">Store</div>
<div class="t" style="left:1590px;width:120px;text-align:right;top:454px;color:#fff;font-size:25px;line-height:25px;">16</div>
<div class="t" style="left:1190px;width:120px;text-align:right;top:538px;color:#fff;font-size:25px;line-height:25px;">Shared</div>
<div class="t" style="left:1390px;width:120px;text-align:right;top:538px;color:#fff;font-size:25px;line-height:25px;">Store</div>
<div class="t" style="left:1590px;width:120px;text-align:right;top:538px;color:#fff;font-size:25px;line-height:25px;">16</div>
<div class="t" style="left:1190px;width:120px;text-align:right;top:580px;color:#fff;font-size:25px;line-height:25px;">Shared</div>
<div class="t" style="left:1390px;width:120px;text-align:right;top:580px;color:#fff;font-size:25px;line-height:25px;">Store</div>
<div class="t" style="left:1590px;width:120px;text-align:right;top:580px;color:#fff;font-size:25px;line-height:25px;">16</div>
<div class="t" style="left:1190px;width:120px;text-align:right;top:664px;color:#fff;font-size:25px;line-height:25px;">Shared</div>
<div class="t" style="left:1390px;width:120px;text-align:right;top:664px;color:#fff;font-size:25px;line-height:25px;">Store</div>
<div class="t" style="left:1590px;width:120px;text-align:right;top:664px;color:#fff;font-size:25px;line-height:25px;">16</div>
<div class="t" style="left:1190px;width:120px;text-align:right;top:706px;color:#fff;font-size:25px;line-height:25px;">Shared</div>
<div class="t" style="left:1390px;width:120px;text-align:right;top:706px;color:#fff;font-size:25px;line-height:25px;">Store</div>
<div class="t" style="left:1590px;width:120px;text-align:right;top:706px;color:#fff;font-size:25px;line-height:25px;">16</div>
<div class="t" style="left:1190px;width:120px;text-align:right;top:790px;color:#fff;font-size:25px;line-height:25px;">Shared</div>
<div class="t" style="left:1390px;width:120px;text-align:right;top:790px;color:#fff;font-size:25px;line-height:25px;">Store</div>
<div class="t" style="left:1590px;width:120px;text-align:right;top:790px;color:#fff;font-size:25px;line-height:25px;">16</div>
<div class="t" style="left:1190px;width:120px;text-align:right;top:832px;color:#fff;font-size:25px;line-height:25px;">Shared</div>
<div class="t" style="left:1390px;width:120px;text-align:right;top:832px;color:#fff;font-size:25px;line-height:25px;">Store</div>
<div class="t" style="left:1590px;width:120px;text-align:right;top:832px;color:#fff;font-size:25px;line-height:25px;">16</div>
<div class="t" style="left:1190px;width:120px;text-align:right;top:916px;color:#fff;font-size:25px;line-height:25px;">Shared</div>
<div class="t" style="left:1390px;width:120px;text-align:right;top:916px;color:#fff;font-size:25px;line-height:25px;">Store</div>
<div class="t" style="left:1590px;width:120px;text-align:right;top:916px;color:#fff;font-size:25px;line-height:25px;">16</div>
<div class="t" style="left:1190px;width:120px;text-align:right;top:1000px;color:#fff;font-size:25px;line-height:25px;">Shared</div>
<div class="t" style="left:1390px;width:120px;text-align:right;top:1000px;color:#fff;font-size:25px;line-height:25px;">Store</div>
<div class="t" style="left:1590px;width:120px;text-align:right;top:1000px;color:#fff;font-size:25px;line-height:25px;">16</div>
<div class="t" style="left:1190px;width:120px;text-align:right;top:1084px;color:#fff;font-size:25px;line-height:25px;">Shared</div>
<div class="t" style="left:1390px;width:120px;text-align:right;top:1084px;color:#fff;font-size:25px;line-height:25px;">Store</div>
<div class="t" style="left:1590px;width:120px;text-align:right;top:1084px;color:#fff;font-size:25px;line-height:25px;">16</div>
<div class="t" style="left:1190px;width:120px;text-align:right;top:1126px;color:#fff;font-size:25px;line-height:25px;">Shared</div>
<div class="t" style="left:1390px;width:120px;text-align:right;top:1126px;color:#fff;font-size:25px;line-height:25px;">Store</div>
<div class="t" style="left:1590px;width:120px;text-align:right;top:1126px;color:#fff;font-size:25px;line-height:25px;">16</div>
<div class="hdr" style="left:1164px;top:336px;width:148px;height:65px">
<div class="clip" style="left:2px;right:0px;top:0px;bottom:0px"><div class="t" style="right:0px;top:2.5px;line-height:30px;text-align:right;">Address<br>Space</div></div></div>
<div class="hdr" style="left:1313px;top:336px;width:199px;height:65px">
<div class="clip" style="left:7px;right:0px;top:0px;bottom:0px"><div class="t" style="right:0px;top:2.5px;line-height:30px;text-align:right;">Access<br>Operation</div></div></div>
<div class="hdr" style="left:1513px;top:336px;width:199px;height:65px">
<div class="clip" style="left:7px;right:0px;top:0px;bottom:0px"><div class="t" style="right:0px;top:2.5px;line-height:30px;text-align:right;">Access<br>Size</div></div></div>
<div class="hdr" style="left:1713px;top:336px;width:199px;height:65px">
<div class="clip" style="left:7px;right:0px;top:0px;bottom:0px"><div class="t" style="right:0px;top:2.5px;line-height:30px;text-align:right;font-weight:700;letter-spacing:-0.27px;">L1 Wavefronts<br>Shared Excessive</div></div></div>
<div class="hdr" style="left:1913px;top:336px;width:199px;height:65px">
<div class="clip" style="left:7px;right:0px;top:0px;bottom:0px"><div class="t" style="right:0px;top:2.5px;line-height:30px;text-align:right;">L1 Theoretical Sectors<br>Global Excessive</div></div></div>
<div class="hdr" style="left:2113px;top:336px;width:199px;height:65px">
<div class="clip" style="left:7px;right:0px;top:0px;bottom:0px"><div class="t" style="right:0px;top:2.5px;line-height:30px;text-align:right;">L2 Theoretical<br>Sectors Global</div></div></div>
<div class="hdr" style="left:2313px;top:336px;width:199px;height:65px">
<div class="clip" style="left:7px;right:0px;top:0px;bottom:0px"><div class="t" style="right:0px;top:2.5px;line-height:30px;text-align:right;">L2 Theoretical<br>Sectors Global Ideal</div></div></div>
<div class="hdr" style="left:2516px;top:336px;width:20px;height:65px;border-right:0"></div>
<div class="a" style="left:2537px;top:336px;width:26px;height:913px;background:#3b3b3b"></div>
<div class="a" style="left:2537px;top:336px;width:26px;height:26px;background:#3d3d3d;border:2px solid #4f4f4f"></div>
<svg class="a" style="left:2542px;top:344px" width="16" height="9" viewBox="0 0 16 9"><path d="M0 9H16L8 0Z" fill="#bdbdbd"/></svg>
<div class="a" style="left:2538px;top:1166px;width:25px;height:51px;background:#3f3f3f;border:2px solid #575757"></div>
<div class="a" style="left:2537px;top:1222px;width:26px;height:25px;background:#3d3d3d;border:2px solid #4f4f4f"></div>
<svg class="a" style="left:2542px;top:1230px" width="16" height="9" viewBox="0 0 16 9"><path d="M0 0H16L8 9Z" fill="#bdbdbd"/></svg>
<div class="a" style="left:1164px;top:1249px;width:1372px;height:26px;background:#3c3c3c"></div>
<div class="a" style="left:1164px;top:1249px;width:26px;height:26px;background:#3d3d3d;border:2px solid #4f4f4f"></div>
<svg class="a" style="left:1172px;top:1254px" width="9" height="16" viewBox="0 0 9 16"><path d="M9 0V16L0 8Z" fill="#bdbdbd"/></svg>
<div class="a" style="left:1408px;top:1249px;width:463px;height:26px;background:linear-gradient(#454545,#3f3f3f);border:2px solid #555"></div>
<div class="a" style="left:2509px;top:1249px;width:26px;height:26px;background:#3d3d3d;border:2px solid #4f4f4f"></div>
<svg class="a" style="left:2518px;top:1254px" width="9" height="16" viewBox="0 0 9 16"><path d="M0 0V16L9 8Z" fill="#bdbdbd"/></svg>
<div class="a" style="left:2536px;top:1249px;width:28px;height:27px;background:#353535"></div>
<div class="a" style="left:1292px;top:1280px;width:4px;height:4px;background:#8a8a8a"></div>
<div class="a" style="left:1298px;top:1280px;width:4px;height:4px;background:#8a8a8a"></div>
<div class="a" style="left:1304px;top:1280px;width:4px;height:4px;background:#8a8a8a"></div>
<div class="a" style="left:1310px;top:1280px;width:4px;height:4px;background:#8a8a8a"></div>
<div class="a" style="left:1316px;top:1280px;width:4px;height:4px;background:#8a8a8a"></div>
<div class="a" style="left:1322px;top:1280px;width:4px;height:4px;background:#8a8a8a"></div>
<div class="t" style="left:25px;top:1290px;color:#fff;font-size:25px;line-height:25px;">Inline Functions</div>
<div class="t" style="left:231px;top:1290px;color:#a6a6a6;font-size:25px;line-height:25px;">Source Markers</div>
<div class="a" style="left:16px;top:1321px;width:194px;height:7px;background:#0078d4"></div>
<div class="a" style="left:222px;top:1321px;width:194px;height:7px;background:#808080"></div>
<div class="t" style="left:17px;top:1344px;color:#fff;font-size:25px;line-height:25px;letter-spacing:0.2px">Select a source line in an active inline function to show additional information.</div></body></html>
